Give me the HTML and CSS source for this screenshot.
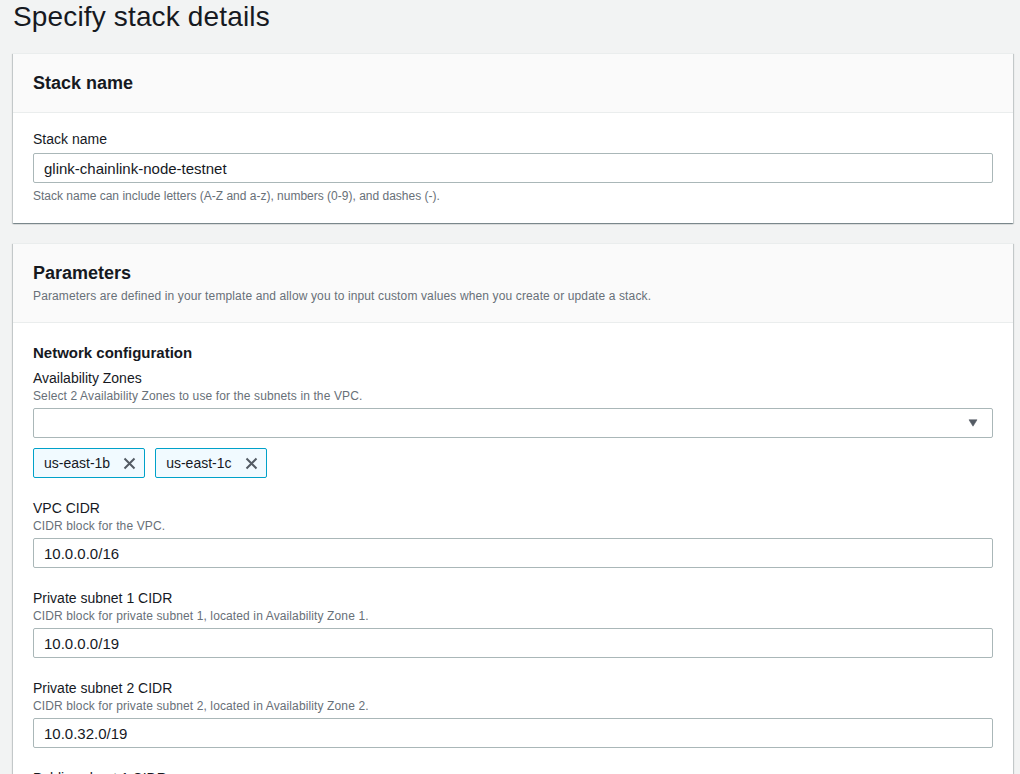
FILE: index.html
```html
<!DOCTYPE html>
<html lang="en">
<head>
<meta charset="utf-8">
<title>Specify stack details</title>
<link rel="stylesheet" href="styles.css">
</head>
<body>
<main class="page">
  <h1 class="page-title">Specify stack details</h1>

  <section class="panel">
    <header class="panel-header">
      <h2 class="panel-title">Stack name</h2>
    </header>
    <div class="panel-body panel-body-tight">
      <div class="field field-first">
        <label class="field-label" for="stack-name">Stack name</label>
        <input class="input" id="stack-name" type="text" value="glink-chainlink-node-testnet">
        <p class="field-hint">Stack name can include letters (A-Z and a-z), numbers (0-9), and dashes (-).</p>
      </div>
    </div>
  </section>

  <section class="panel">
    <header class="panel-header">
      <h2 class="panel-title">Parameters</h2>
      <p class="panel-desc">Parameters are defined in your template and allow you to input custom values when you create or update a stack.</p>
    </header>
    <div class="panel-body">
      <h3 class="group-title">Network configuration</h3>

      <div class="field field-first">
        <div class="field-label">Availability Zones</div>
        <div class="field-desc">Select 2 Availability Zones to use for the subnets in the VPC.</div>
        <div class="select">
          <span class="select-value"></span>
          <svg class="caret" width="16" height="16" viewBox="0 0 16 16" aria-hidden="true"><path d="M4 4.8h8l-4 6.4z" fill="#545b64" stroke="#545b64" stroke-width="0.6" stroke-linejoin="round"/></svg>
        </div>
        <div class="tokens">
          <span class="token">us-east-1b<svg class="token-x" width="13" height="13" viewBox="0 0 13 13" aria-hidden="true"><path d="M1.5 1.5l10 10M11.5 1.5l-10 10" stroke="#545b64" stroke-width="2" fill="none"/></svg></span>
          <span class="token">us-east-1c<svg class="token-x" width="13" height="13" viewBox="0 0 13 13" aria-hidden="true"><path d="M1.5 1.5l10 10M11.5 1.5l-10 10" stroke="#545b64" stroke-width="2" fill="none"/></svg></span>
        </div>
      </div>

      <div class="field">
        <label class="field-label" for="vpc-cidr">VPC CIDR</label>
        <div class="field-desc">CIDR block for the VPC.</div>
        <input class="input" id="vpc-cidr" type="text" value="10.0.0.0/16">
      </div>

      <div class="field">
        <label class="field-label" for="priv1">Private subnet 1 CIDR</label>
        <div class="field-desc">CIDR block for private subnet 1, located in Availability Zone 1.</div>
        <input class="input" id="priv1" type="text" value="10.0.0.0/19">
      </div>

      <div class="field">
        <label class="field-label" for="priv2">Private subnet 2 CIDR</label>
        <div class="field-desc">CIDR block for private subnet 2, located in Availability Zone 2.</div>
        <input class="input" id="priv2" type="text" value="10.0.32.0/19">
      </div>

      <div class="field">
        <label class="field-label" for="pub1">Public subnet 1 CIDR</label>
        <div class="field-desc">CIDR block for the public DMZ subnet 1, located in Availability Zone 1.</div>
        <input class="input" id="pub1" type="text" value="10.0.128.0/20">
      </div>
    </div>
  </section>
</main>
</body>
</html>
```

FILE: styles.css
```css
* {
  box-sizing: border-box;
}

html, body {
  margin: 0;
  padding: 0;
}

body {
  background: #f2f3f3;
  color: #16191f;
  font-family: "Liberation Sans", Arial, sans-serif;
  font-size: 14px;
}

.page {
  width: 1013px;
  padding: 0 0 40px 13px;
}

.page-title {
  margin: 0 0 19px 0;
  font-size: 28px;
  line-height: 34px;
  font-weight: 400;
  letter-spacing: 0.15px;
  color: #16191f;
}

.panel {
  width: 1000px;
  background: #ffffff;
  border-top: 1px solid #eaeded;
  box-shadow: 0 1px 1px 0 rgba(0, 28, 36, 0.3),
              1px 1px 1px 0 rgba(0, 28, 36, 0.15),
              -1px 1px 1px 0 rgba(0, 28, 36, 0.15);
  margin-bottom: 20px;
}

.panel-header {
  background: #fafafa;
  border-bottom: 1px solid #eaeded;
  padding: 18px 20px 18px 20px;
}

.panel-title {
  margin: 0;
  font-size: 18px;
  line-height: 22px;
  font-weight: 700;
  color: #16191f;
}

.panel-desc {
  margin: 4px 0 0 0;
  font-size: 12px;
  line-height: 16px;
  letter-spacing: 0.13px;
  color: #687078;
}

.panel-body {
  padding: 20px 20px 20px 20px;
}

.panel-body-tight {
  padding: 16px 20px 19px 20px;
}

.group-title {
  margin: 0 0 5px 0;
  font-size: 15px;
  line-height: 20px;
  font-weight: 700;
  color: #16191f;
}

.field {
  display: flex;
  flex-direction: column;
  margin-top: 20px;
}

.field-first {
  margin-top: 0;
}

.field-label {
  display: block;
  font-size: 14px;
  line-height: 20px;
  color: #16191f;
}

.field-desc {
  font-size: 12px;
  line-height: 16px;
  letter-spacing: 0.12px;
  color: #687078;
}

.field-hint {
  margin: 5px 0 0 0;
  font-size: 12px;
  line-height: 16px;
  color: #687078;
}

.input {
  display: block;
  width: 100%;
  height: 30px;
  margin: 4px 0 0 0;
  padding: 0 10px;
  border: 1px solid #aab7b8;
  border-radius: 2px;
  background: #ffffff;
  font-family: "Liberation Sans", Arial, sans-serif;
  font-size: 15px;
  line-height: 28px;
  color: #16191f;
  outline: none;
}

.select {
  display: flex;
  align-items: center;
  justify-content: space-between;
  width: 100%;
  height: 30px;
  margin-top: 4px;
  padding: 0 11px 0 10px;
  border: 1px solid #aab7b8;
  border-radius: 2px;
  background: #ffffff;
}

.caret {
  display: block;
  flex: none;
}

.tokens {
  display: flex;
  gap: 10px;
  margin-top: 10px;
}

.token {
  display: inline-flex;
  align-items: center;
  gap: 13px;
  height: 30px;
  padding: 0 8px 0 10px;
  border: 1px solid #00a1c9;
  border-radius: 2px;
  background: #f1faff;
  font-size: 14px;
  line-height: 20px;
  color: #16191f;
}

.token-x {
  display: block;
  flex: none;
}
```
